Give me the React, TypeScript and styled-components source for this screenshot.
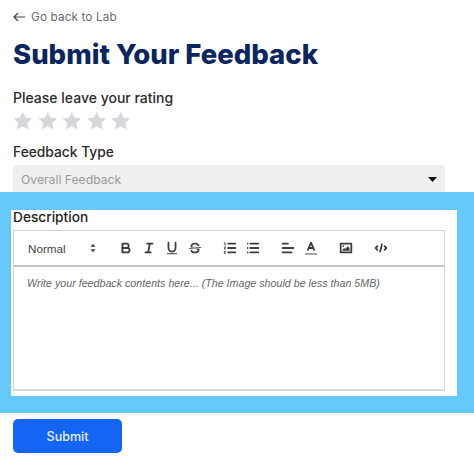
import React from 'react'
import styled, { createGlobalStyle } from 'styled-components'

const GlobalStyle = createGlobalStyle`
  html, body {
    margin: 0;
    padding: 0;
    background: #fff;
  }
  body {
    font-family: Inter, "Open Sans", sans-serif;
  }
`

const Page = styled.div`
  width: 474px;
  height: 462px;
  overflow: hidden;
`

const Top = styled.div`
  padding: 9px 29px 0 13px;
`

const BackLink = styled.a`
  display: flex;
  align-items: center;
  gap: 6px;
  height: 16px;
  font-size: 11.8px;
  letter-spacing: 0.1px;
  color: #6b6b6b;
`

const Title = styled.h1`
  margin: 12px 0 0;
  font-size: 27.5px;
  line-height: 34px;
  font-weight: 800;
  white-space: nowrap;
  color: #0b2560;
`

const Label = styled.div`
  font-size: 14px;
  line-height: 18px;
  font-weight: 500;
  color: #2b2b2b;
`

const RatingLabel = styled(Label)`
  margin-top: 18px;
`

const Stars = styled.div`
  display: flex;
  gap: 5px;
  margin-top: 4px;
`

const TypeLabel = styled(Label)`
  margin-top: 13px;
  font-size: 13.8px;
`

const SelectBox = styled.div`
  display: flex;
  align-items: center;
  justify-content: space-between;
  height: 27px;
  margin-top: 4px;
  padding: 1px 8px 0;
  box-sizing: border-box;
  background: #efefef;
  border-radius: 4px 4px 0 0;
  font-size: 12.2px;
  color: #9a9a9a;
`

const Band = styled.section`
  padding: 18px 17px 17px 11px;
  background: #63c9f9;
`

const Panel = styled.div`
  padding: 0 12px 5px 2px;
  background: #fff;
`

const DescriptionLabel = styled(Label)`
  height: 20px;
  line-height: 14px;
  font-size: 13.7px;
  color: #222;
`

const Toolbar = styled.div`
  display: flex;
  align-items: center;
  height: 34px;
  padding-left: 7px;
  border: 1px solid #d2d2d2;
  border-bottom: 2px solid #c6c6c6;
`

const Picker = styled.div`
  display: flex;
  align-items: center;
  justify-content: space-between;
  width: 68px;
  padding-left: 7px;
  margin-right: 18px;
  font-family: "Liberation Sans", Arial, sans-serif;
  font-size: 11.7px;
  color: #444;
`

const Group = styled.div`
  display: flex;
  margin-right: 12px;
`

const ToolButton = styled.button`
  display: flex;
  align-items: center;
  justify-content: center;
  width: 23px;
  height: 20px;
  padding: 0;
  border: 0;
  background: none;
  color: #3c3c3c;
`

const Icon = styled.svg`
  width: 16px;
  height: 16px;
  fill: none;
  stroke: currentColor;
  stroke-width: 2;
  stroke-linecap: round;
  stroke-linejoin: round;
`

const Thin = styled.g`
  stroke-width: 1;
`

const Solid = styled.g`
  fill: currentColor;
  stroke: none;
`

const Editor = styled.div`
  height: 124px;
  padding: 9px 13px;
  border: 1px solid #d2d2d2;
  border-top: 0;
  border-bottom: 2px solid #d8d8d8;
  font-family: "Liberation Sans", Arial, sans-serif;
  font-size: 10.7px;
  line-height: 14px;
  font-style: italic;
  color: #666;
  box-sizing: border-box;
`

const Footer = styled.div`
  padding: 6px 13px 0;
`

const SubmitButton = styled.button`
  width: 109px;
  height: 34px;
  border: 0;
  border-radius: 5px;
  background: #1565f5;
  color: #e8f0ff;
  font-family: Inter, sans-serif;
  font-size: 12.5px;
  font-weight: 500;
`

const Star = () => (
  <svg width="19.5" height="19" viewBox="0 0 20 19" aria-hidden="true">
    <path
      d="M10 1.5l2.6 5.6 6 .7-4.4 4.2 1.2 6-5.4-3-5.4 3 1.2-6L1.4 7.8l6-.7z"
      fill="#d5d7da"
      stroke="#d5d7da"
      strokeLinejoin="round"
    />
  </svg>
)

const BackArrow = () => (
  <svg width="12" height="10" viewBox="0 0 12 10" fill="none" stroke="#444" strokeWidth="1.2" aria-hidden="true">
    <path d="M12 5H1M5 1L1 5l4 4" />
  </svg>
)

const Caret = () => (
  <svg width="9" height="5" viewBox="0 0 9 5" aria-hidden="true">
    <path d="M0 0h9L4.5 5z" fill="#111" />
  </svg>
)

const PickerArrows = () => (
  <svg width="6" height="10" viewBox="0 0 7 10" fill="#444" aria-hidden="true">
    <path d="M3.5 0L6.5 3.6H.5zM3.5 10L.5 6.4h6z" />
  </svg>
)

export default function App() {
  return (
    <Page>
      <GlobalStyle />
      <Top>
        <BackLink>
          <BackArrow />
          Go back to Lab
        </BackLink>
        <Title>Submit Your Feedback</Title>
        <RatingLabel>Please leave your rating</RatingLabel>
        <Stars>
          {[1, 2, 3, 4, 5].map((n) => (
            <Star key={n} />
          ))}
        </Stars>
        <TypeLabel>Feedback Type</TypeLabel>
        <SelectBox>
          Overall Feedback
          <Caret />
        </SelectBox>
      </Top>
      <Band>
        <Panel>
          <DescriptionLabel>Description</DescriptionLabel>
          <Toolbar>
            <Picker>
              Normal
              <PickerArrows />
            </Picker>
            <Group>
              <ToolButton aria-label="Bold">
                <Icon viewBox="0 0 18 18">
                  <path d="M5 4h4.5a2.5 2.5 0 0 1 0 5H5z" />
                  <path d="M5 9h5.5a2.5 2.5 0 0 1 0 5H5z" />
                </Icon>
              </ToolButton>
              <ToolButton aria-label="Italic">
                <Icon viewBox="0 0 18 18">
                  <path d="M7 4h6M5 14h6M8 14l2-10" />
                </Icon>
              </ToolButton>
              <ToolButton aria-label="Underline">
                <Icon viewBox="0 0 18 18">
                  <path d="M5 3v6a4 4 0 0 0 8 0V3" />
                  <Solid>
                    <rect x="3" y="15" width="12" height="1" rx=".5" />
                  </Solid>
                </Icon>
              </ToolButton>
              <ToolButton aria-label="Strike">
                <Icon viewBox="0 0 18 18">
                  <Thin>
                    <path d="M15.5 8.5l-13 1" />
                  </Thin>
                  <Solid>
                    <path d="M9 8C6.5 7.8 6 7.5 6 6.5 6 5.8 7.3 5 9 5c1.6 0 2.8.7 3 1.3a1 1 0 0 0 1.9-.6C13.4 4.1 11.4 3 9 3 6.2 3 4 4.5 4 6.5a3.2 3.2 0 0 0 .5 1.8z" />
                    <path d="M9 10c2.5.2 3 .5 3 1.5 0 .7-1.3 1.5-3 1.5-1.6 0-2.8-.7-3-1.3a1 1 0 1 0-1.9.6C4.6 13.9 6.6 15 9 15c2.8 0 5-1.5 5-3.5a3.2 3.2 0 0 0-.5-1.8z" />
                  </Solid>
                </Icon>
              </ToolButton>
            </Group>
            <Group>
              <ToolButton aria-label="Ordered list">
                <Icon viewBox="0 0 18 18">
                  <path d="M7 4h8M7 9h8M7 14h8" />
                  <Thin>
                    <path d="M2.5 3.5L3.5 3v3M2.5 8h1.5l-1.5 2h1.5M2.5 13H4l-.8 1 .8 1H2.5" />
                  </Thin>
                </Icon>
              </ToolButton>
              <ToolButton aria-label="Bullet list">
                <Icon viewBox="0 0 18 18">
                  <path d="M6 4h9M6 9h9M6 14h9M3 4h0M3 9h0M3 14h0" />
                </Icon>
              </ToolButton>
            </Group>
            <Group>
              <ToolButton aria-label="Align">
                <Icon viewBox="0 0 18 18">
                  <path d="M3 9h12M3 14h10M3 4h6" />
                </Icon>
              </ToolButton>
              <ToolButton aria-label="Color">
                <Icon viewBox="0 0 18 18">
                  <path d="M5.5 11L9 3l3.5 8M6.4 9h5.2" />
                  <path d="M3 15.5h12" stroke="#999" />
                </Icon>
              </ToolButton>
            </Group>
            <Group>
              <ToolButton aria-label="Image">
                <Icon viewBox="0 0 18 18">
                  <rect x="3" y="4" width="12" height="10" />
                  <Solid>
                    <circle cx="6" cy="7" r="1" />
                    <path d="M5 12v-1l2-2 1 1 3-3 2 2v3z" />
                  </Solid>
                </Icon>
              </ToolButton>
            </Group>
            <Group>
              <ToolButton aria-label="Code">
                <Icon viewBox="0 0 18 18">
                  <path d="M5 7L3 9l2 2M13 7l2 2-2 2M10 5l-2 8" />
                </Icon>
              </ToolButton>
            </Group>
          </Toolbar>
          <Editor>Write your feedback contents here... (The Image should be less than 5MB)</Editor>
        </Panel>
      </Band>
      <Footer>
        <SubmitButton>Submit</SubmitButton>
      </Footer>
    </Page>
  )
}
